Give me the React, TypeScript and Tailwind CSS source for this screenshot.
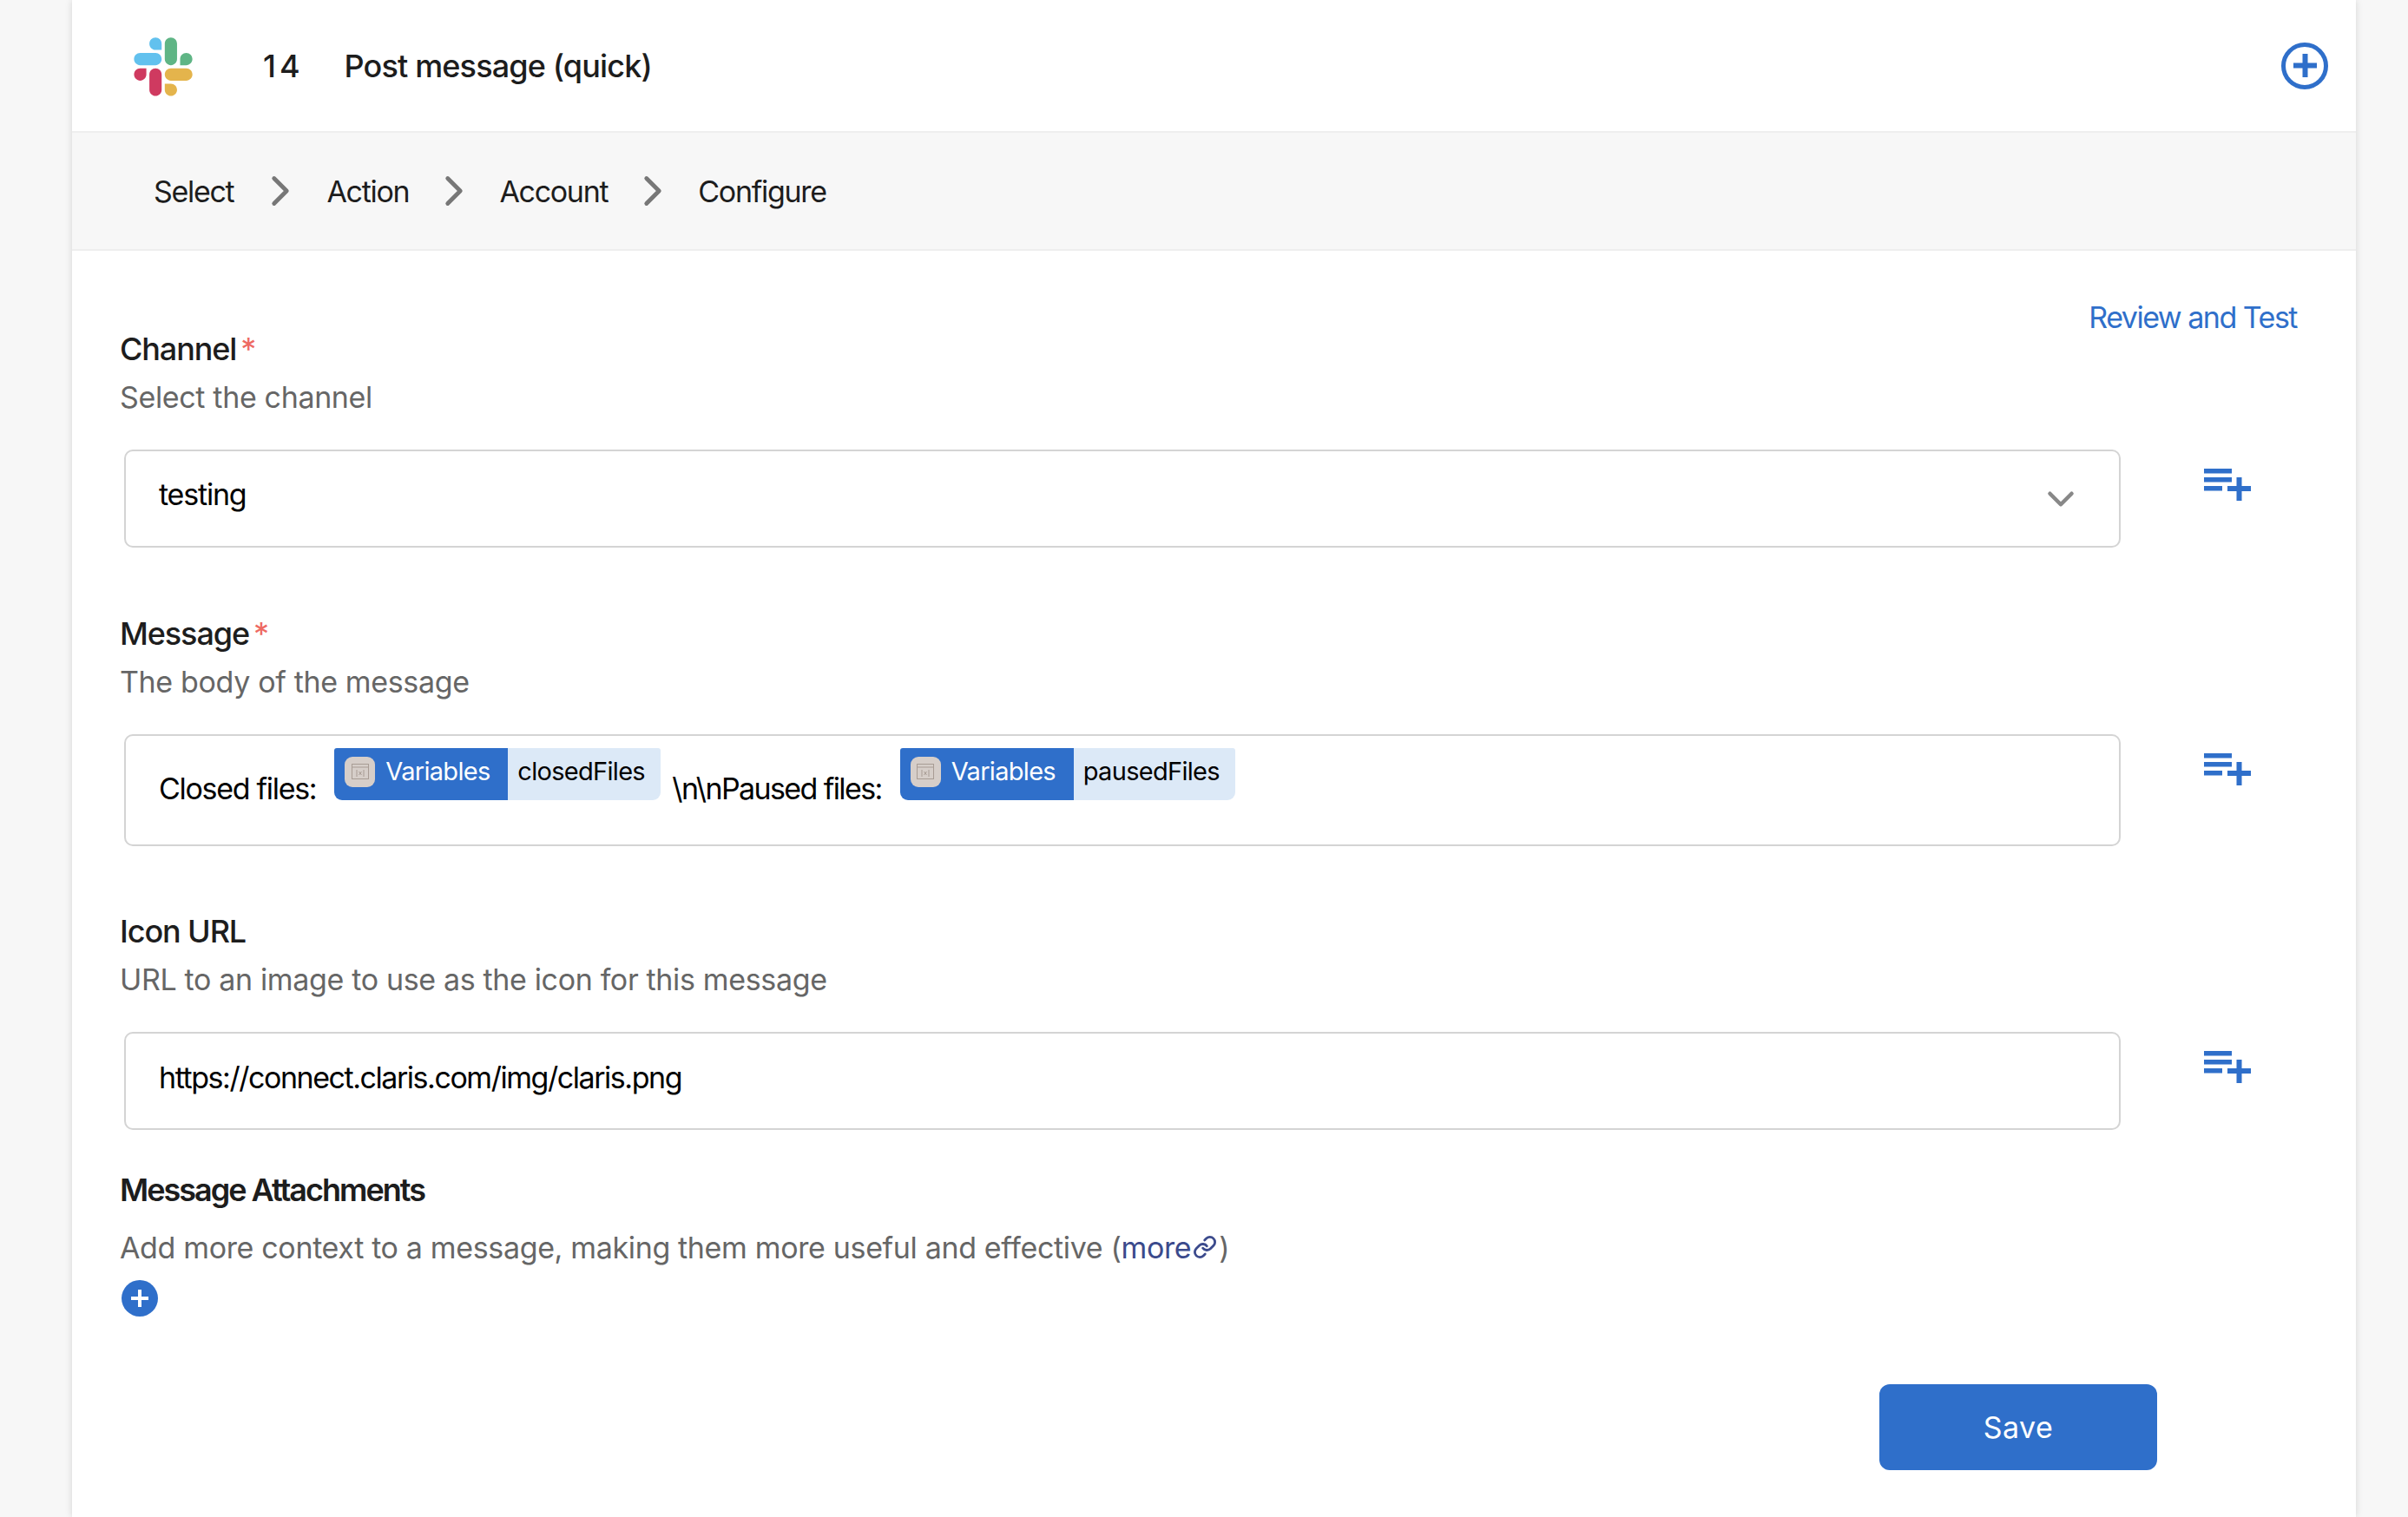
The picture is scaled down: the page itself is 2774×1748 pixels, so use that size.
import { ChevronDown, ChevronRight, Link } from 'lucide-react';

function SlackLogo() {
    return (
        <svg viewBox="0 0 127 127" className="w-[68px] h-[68px] mt-[3px]">
            <path fill="#cf3a60" d="M27.2 80c0 7.3-5.9 13.2-13.2 13.2C6.7 93.2.8 87.3.8 80c0-7.3 5.9-13.2 13.2-13.2h13.2V80zm6.6 0c0-7.3 5.9-13.2 13.2-13.2 7.3 0 13.2 5.9 13.2 13.2v33c0 7.3-5.9 13.2-13.2 13.2-7.3 0-13.2-5.9-13.2-13.2V80z" />
            <path fill="#62c1ee" d="M47 27c-7.3 0-13.2-5.9-13.2-13.2C33.8 6.5 39.7.6 47 .6c7.3 0 13.2 5.9 13.2 13.2V27H47zm0 6.7c7.3 0 13.2 5.9 13.2 13.2 0 7.3-5.9 13.2-13.2 13.2H13.9C6.6 60.1.7 54.2.7 46.9c0-7.3 5.9-13.2 13.2-13.2H47z" />
            <path fill="#5fb585" d="M99.9 46.9c0-7.3 5.9-13.2 13.2-13.2 7.3 0 13.2 5.9 13.2 13.2 0 7.3-5.9 13.2-13.2 13.2H99.9V46.9zm-6.6 0c0 7.3-5.9 13.2-13.2 13.2-7.3 0-13.2-5.9-13.2-13.2V13.8C66.9 6.5 72.8.6 80.1.6c7.3 0 13.2 5.9 13.2 13.2v33.1z" />
            <path fill="#e4b44c" d="M80.1 99.8c7.3 0 13.2 5.9 13.2 13.2 0 7.3-5.9 13.2-13.2 13.2-7.3 0-13.2-5.9-13.2-13.2V99.8h13.2zm0-6.6c-7.3 0-13.2-5.9-13.2-13.2 0-7.3 5.9-13.2 13.2-13.2h33.1c7.3 0 13.2 5.9 13.2 13.2 0 7.3-5.9 13.2-13.2 13.2H80.1z" />
        </svg>
    );
}

function AddVariableIcon() {
    return (
        <svg viewBox="0 0 54 37" className="w-[54px] h-[37px] fill-[#2f6fca]">
            <rect x="0" y="0" width="32" height="5.5" />
            <rect x="0" y="10" width="32" height="5.5" />
            <rect x="0" y="20" width="21" height="5.5" />
            <rect x="27" y="20" width="27" height="6" />
            <rect x="37.5" y="10" width="6" height="27" />
        </svg>
    );
}

function VariableChip({ name, width }: { name: string; width: string }) {
    return (
        <span className={`flex h-[60px] rounded-t-[3px] rounded-b-[9px] overflow-hidden text-[29px] tracking-[-0.7px] ${width}`}>
            <span className="flex items-center w-[200px] bg-[#2f6fca] text-white pl-[12px] pb-[6px]">
                <span className="flex items-center justify-center w-[35px] h-[35px] rounded-[9px] bg-[#d6cec9] mr-[12px] shrink-0">
                    <svg viewBox="0 0 20 18" className="w-[20px] h-[18px] stroke-[#a89c94] fill-none">
                        <rect x="0.5" y="0.5" width="19" height="17" />
                        <path d="M0.5 4h19" strokeDasharray="1 1" strokeWidth="2" />
                        <path d="M6 7v8M14 7v8M8.5 9l3 4M11.5 9l-3 4" />
                    </svg>
                </span>
                Variables
            </span>
            <span className="flex flex-1 items-center bg-[#dce9f7] text-black pl-[11px] pb-[6px]">{name}</span>
        </span>
    );
}

function Field({ label, required, hint, children }: { label: string; required?: boolean; hint: string; children: React.ReactNode }) {
    return (
        <div>
            <div className="text-[36px] leading-[44px] font-medium text-[#1d1d1d] tracking-[-1.1px]">
                {label}
                {required && <span className="text-[#ee6a63] font-normal ml-[5px]">*</span>}
            </div>
            <div className="text-[34px] leading-[44px] text-[#666666] mt-[12px] tracking-[-0.35px]">{hint}</div>
            <div className="flex items-start mt-[38px] ml-[5px]">
                <div className="w-[2300px]">{children}</div>
                <div className="ml-[96px] mt-[22px]">
                    <AddVariableIcon />
                </div>
            </div>
        </div>
    );
}

export default function App() {
    return (
        <div className="h-[1748px] overflow-hidden bg-[#f7f7f7] font-['Inter','Liberation_Sans',sans-serif]">
            <div className="ml-[83px] w-[2631px] h-full bg-white shadow-[0_0_8px_rgba(0,0,0,0.14)]">
                {/* Header */}
                <div className="flex items-center h-[153px] pl-[71px] pr-[32px] border-b-[2px] border-[#eeeeee]">
                    <SlackLogo />
                    <span className="ml-[81px] text-[36px] font-medium text-[#1d1d1d] tracking-[4px]">14</span>
                    <span className="ml-[47px] text-[36px] font-medium text-[#1d1d1d] tracking-[-0.85px]">Post message (quick)</span>
                    <div className="ml-auto flex items-center justify-center w-[54px] h-[54px] rounded-full border-[5px] border-[#2f6fca]">
                        <svg viewBox="0 0 27 27" className="w-[27px] h-[27px] fill-[#2f6fca]">
                            <rect x="0" y="10.5" width="27" height="6" />
                            <rect x="10.5" y="0" width="6" height="27" />
                        </svg>
                    </div>
                </div>

                {/* Steps */}
                <div className="flex items-center h-[136px] pl-[94px] bg-[#f7f7f7] border-b-[2px] border-[#eeeeee] text-[34px] text-[#1d1d1d] tracking-[-1.3px]">
                    <span>Select</span>
                    <ChevronRight className="w-[58px] h-[58px] ml-[25px] mr-[24px] text-[#777777]" strokeWidth={2} />
                    <span>Action</span>
                    <ChevronRight className="w-[58px] h-[58px] mx-[23px] text-[#777777]" strokeWidth={2} />
                    <span>Account</span>
                    <ChevronRight className="w-[58px] h-[58px] mx-[23px] text-[#777777]" strokeWidth={2} />
                    <span>Configure</span>
                </div>

                {/* Form */}
                <div className="relative px-[55px] pt-[91px]">
                    <div className="absolute right-[68px] top-[55px] text-[34px] leading-[44px] text-[#2f6fca] tracking-[-1.5px]">Review and Test</div>

                    <Field label="Channel" required hint="Select the channel">
                        <div className="flex items-center justify-between h-[113px] pl-[38px] pr-[42px] rounded-[10px] border-[2px] border-[#d4d4d4] text-[34px] tracking-[-1.2px] text-black">
                            <span className="mb-[10px]">testing</span>
                            <ChevronDown className="w-[50px] h-[50px] text-[#888888]" strokeWidth={2.2} />
                        </div>
                    </Field>

                    <div className="mt-[77px]">
                        <Field label="Message" required hint="The body of the message">
                            <div className="flex items-start h-[129px] pl-[38px] pt-[14px] rounded-[10px] border-[2px] border-[#d4d4d4] text-[34px] tracking-[-1.3px] text-black">
                                <span className="mt-[21px] mr-[21px]">Closed files:</span>
                                <VariableChip name="closedFiles" width="w-[376px]" />
                                <span className="mt-[21px] ml-[13px] mr-[21px] tracking-[-1.6px]">\n\nPaused files:</span>
                                <VariableChip name="pausedFiles" width="w-[386px]" />
                            </div>
                        </Field>
                    </div>

                    <div className="mt-[76px]">
                        <Field label="Icon URL" hint="URL to an image to use as the icon for this message">
                            <div className="flex items-center h-[113px] pl-[38px] rounded-[10px] border-[2px] border-[#d4d4d4] text-[34px] tracking-[-1.45px] text-black">
                                <span className="mb-[9px]">https://connect.claris.com/img/claris.png</span>
                            </div>
                        </Field>
                    </div>

                    <div className="mt-[47px] text-[36px] leading-[44px] font-semibold text-[#1d1d1d] tracking-[-2px]">Message Attachments</div>
                    <div className="mt-[23px] flex items-center text-[34px] leading-[44px] text-[#666666] tracking-[-0.35px]">
                        Add more context to a message, making them more useful and effective (
                        <span className="text-[#3b4a8c]">more</span>
                        <Link className="w-[28px] h-[28px] text-[#3b4a8c] mb-[2px] ml-[2px] mr-[2px]" strokeWidth={2.4} />)
                    </div>
                    <div className="mt-[15px] ml-[2px] flex items-center justify-center w-[42px] h-[42px] rounded-full bg-[#2f6fca]">
                        <svg viewBox="0 0 20 20" className="w-[20px] h-[20px] fill-white">
                            <rect x="0" y="8" width="20" height="4" />
                            <rect x="8" y="0" width="4" height="20" />
                        </svg>
                    </div>

                    <div className="flex justify-end mt-[78px] mr-[174px]">
                        <button className="w-[320px] h-[99px] rounded-[12px] bg-[#2f6fca] text-white text-[34px] tracking-[0.5px]">Save</button>
                    </div>
                </div>
            </div>
        </div>
    );
}
